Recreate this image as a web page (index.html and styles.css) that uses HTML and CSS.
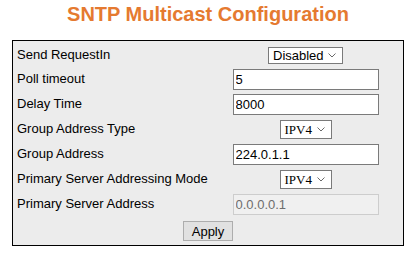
FILE: index.html
```html
<!DOCTYPE html>
<html lang="en">
<head>
  <meta charset="UTF-8">
  <meta name="viewport" content="width=device-width, initial-scale=1.0">
  <title>SNTP Multicast Configuration</title>
  <link rel="stylesheet" href="styles.css">
</head>
<body>
  <div class="page">
    <h2 class="title">SNTP Multicast Configuration</h2>

    <form class="config" id="multicastForm">
      <div class="row first">
        <label class="label">Send RequestIn</label>
        <div class="value">
          <div class="select sel-disabled"><span>Disabled</span>
            <svg class="chev" width="8" height="5" viewBox="0 0 8 5"><path d="M0.5 0.5 L4 4 L7.5 0.5" fill="none" stroke="#6a6a6a" stroke-width="1"/></svg>
          </div>
        </div>
      </div>
      <div class="row">
        <label class="label">Poll timeout</label>
        <div class="value"><input type="text" class="field" value="5"></div>
      </div>
      <div class="row">
        <label class="label">Delay Time</label>
        <div class="value"><input type="text" class="field" value="8000"></div>
      </div>
      <div class="row">
        <label class="label">Group Address Type</label>
        <div class="value">
          <div class="select sel-ip"><span>IPV4</span>
            <svg class="chev" width="8" height="5" viewBox="0 0 8 5"><path d="M0.5 0.5 L4 4 L7.5 0.5" fill="none" stroke="#6a6a6a" stroke-width="1"/></svg>
          </div>
        </div>
      </div>
      <div class="row">
        <label class="label">Group Address</label>
        <div class="value"><input type="text" class="field" value="224.0.1.1"></div>
      </div>
      <div class="row">
        <label class="label">Primary Server Addressing Mode</label>
        <div class="value">
          <div class="select sel-ip"><span>IPV4</span>
            <svg class="chev" width="8" height="5" viewBox="0 0 8 5"><path d="M0.5 0.5 L4 4 L7.5 0.5" fill="none" stroke="#6a6a6a" stroke-width="1"/></svg>
          </div>
        </div>
      </div>
      <div class="row">
        <label class="label">Primary Server Address</label>
        <div class="value"><input type="text" class="field" value="0.0.0.0.1" disabled></div>
      </div>
      <div class="row actions">
        <button type="button" class="apply">Apply</button>
      </div>
    </form>
  </div>
</body>
</html>
```

FILE: styles.css
```css
body {
  margin: 0;
  background: #fff;
  font-family: "Liberation Sans", Arial, sans-serif;
}
.page {
  width: 392px;
  margin-left: 12px;
}
.title {
  margin: 2px 0 14px;
  font-size: 20px;
  line-height: 24px;
  font-weight: bold;
  color: #e57a30;
  text-align: center;
}
.config {
  border: 1px solid #000;
  background: #ececec;
  padding-top: 3px;
}
.row {
  display: flex;
  align-items: center;
  height: 25px;
}
.row.first {
  height: 23px;
}
.label {
  width: 191px;
  padding: 0 0 2px 4px;
  font-size: 13px;
  color: #000;
}
.value {
  flex: 1;
  display: flex;
  justify-content: center;
}
.field {
  box-sizing: border-box;
  width: 146px;
  height: 21px;
  margin: 0;
  padding: 0 2px;
  border: 1px solid #7a7a7a;
  background: #fff;
  font-family: "Liberation Sans", Arial, sans-serif;
  font-size: 13px;
  color: #000;
}
.field:disabled {
  background: #f0f0f0;
  border-color: #cdcdcd;
  color: #6d6d6d;
}
.select {
  box-sizing: border-box;
  display: flex;
  align-items: center;
  justify-content: space-between;
  height: 17px;
  padding: 0 6px 0 4px;
  border: 1px solid #7a7a7a;
  background: #fff;
  font-size: 13px;
}
.sel-disabled {
  width: 75px;
}
.sel-ip {
  width: 52px;
  height: 19px;
  font-family: "Liberation Serif", "Times New Roman", serif;
}
.chev {
  display: block;
}
.actions {
  height: 28px;
  justify-content: center;
}
.apply {
  box-sizing: border-box;
  width: 50px;
  height: 20px;
  padding: 0;
  border: 1px solid #adadad;
  background: #e1e1e1;
  font-family: "Liberation Sans", Arial, sans-serif;
  font-size: 13px;
  color: #000;
}
```
